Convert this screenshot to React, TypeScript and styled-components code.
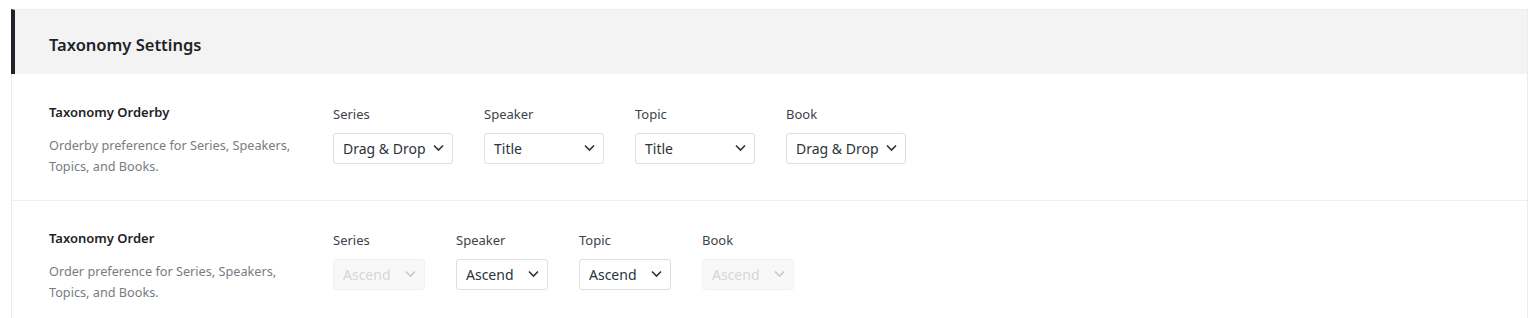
import React from 'react';
import styled, { createGlobalStyle } from 'styled-components';

const GlobalStyle = createGlobalStyle`
  body {
    margin: 0;
    background: #fff;
    font-family: 'Segoe UI', 'Noto Sans', 'Open Sans', sans-serif;
    color: #1d2327;
  }
`;

const Page = styled.div`
  padding-top: 9px;
`;

const Panel = styled.section`
  margin-left: 11px;
  width: 1515px;
  border-left: 1px solid #ececec;
  border-right: 1px solid #ececec;
  background: #fff;
`;

const Header = styled.div`
  height: 65px;
  display: flex;
  align-items: center;
  padding-left: 34px;
  background: #f3f3f3;
  border-top: 1px solid #ececec;
  border-left: 4px solid #1d2327;
  box-sizing: border-box;
  margin-left: -1px;
`;

const HeaderTitle = styled.h2`
  margin: 0;
  font-size: 16.5px;
  font-weight: 600;
  color: #1d2327;
  padding-top: 5px;
`;

const Row = styled.div<{ $first?: boolean }>`
  display: flex;
  align-items: flex-start;
  padding: ${(p) => (p.$first ? '29px 0 23px 37px' : '28px 0 24px 37px')};
  border-top: ${(p) => (p.$first ? 'none' : '1px solid #efefef')};
`;

const Info = styled.div`
  width: 284px;
  flex-shrink: 0;
`;

const Title = styled.h3`
  margin: 0 0 14px;
  font-size: 13px;
  line-height: 18px;
  font-weight: 600;
  color: #1d2327;
`;

const Description = styled.p`
  margin: 0;
  font-size: 12.7px;
  line-height: 21px;
  color: #787c82;
`;

const Fields = styled.div`
  display: flex;
  gap: 31px;
  padding-top: 1px;
`;

const Field = styled.label`
  display: flex;
  flex-direction: column;
  gap: 9px;
`;

const FieldLabel = styled.span`
  font-size: 13px;
  line-height: 20px;
  color: #3c434a;
`;

const SelectWrap = styled.div<{ $width: number }>`
  position: relative;
  width: ${(p) => p.$width}px;
`;

const Select = styled.select`
  appearance: none;
  width: 100%;
  height: 31px;
  padding: 0 24px 0 9px;
  font-family: inherit;
  font-size: 14px;
  color: #2c3338;
  background: #fff;
  border: 1px solid #dedede;
  border-radius: 3px;
  outline: none;

  &:disabled {
    background: #f6f6f6;
    color: #c5c5c5;
    border-color: #ececec;
  }
`;

const Chevron = styled.svg<{ $disabled?: boolean }>`
  position: absolute;
  right: 9px;
  top: 11px;
  width: 11px;
  height: 8px;
  pointer-events: none;
  stroke: ${(p) => (p.$disabled ? '#c8c8c8' : '#2c3338')};
`;

type SelectField = { label: string; value: string; disabled?: boolean };

const Dropdown = ({ field, width }: { field: SelectField; width: number }) => (
  <Field>
    <FieldLabel>{field.label}</FieldLabel>
    <SelectWrap $width={width}>
      <Select defaultValue={field.value} disabled={field.disabled}>
        <option>{field.value}</option>
      </Select>
      <Chevron viewBox="0 0 11 8" fill="none" strokeWidth="1.6" $disabled={field.disabled}>
        <path d="M1 1.5 5.5 6 10 1.5" />
      </Chevron>
    </SelectWrap>
  </Field>
);

const rows = [
  {
    title: 'Taxonomy Orderby',
    description: ['Orderby preference for Series, Speakers,', 'Topics, and Books.'],
    width: 120,
    fields: [
      { label: 'Series', value: 'Drag & Drop' },
      { label: 'Speaker', value: 'Title' },
      { label: 'Topic', value: 'Title' },
      { label: 'Book', value: 'Drag & Drop' }
    ]
  },
  {
    title: 'Taxonomy Order',
    description: ['Order preference for Series, Speakers,', 'Topics, and Books.'],
    width: 92,
    fields: [
      { label: 'Series', value: 'Ascend', disabled: true },
      { label: 'Speaker', value: 'Ascend' },
      { label: 'Topic', value: 'Ascend' },
      { label: 'Book', value: 'Ascend', disabled: true }
    ]
  }
];

const App = () => {
  return (
    <Page>
      <GlobalStyle />
      <Panel>
        <Header>
          <HeaderTitle>Taxonomy Settings</HeaderTitle>
        </Header>
        {rows.map((row, i) => (
          <Row key={row.title} $first={i === 0}>
            <Info>
              <Title>{row.title}</Title>
              <Description>
                {row.description[0]}
                <br />
                {row.description[1]}
              </Description>
            </Info>
            <Fields>
              {row.fields.map((field) => (
                <Dropdown key={field.label} field={field} width={row.width} />
              ))}
            </Fields>
          </Row>
        ))}
      </Panel>
    </Page>
  );
};

export default App;
